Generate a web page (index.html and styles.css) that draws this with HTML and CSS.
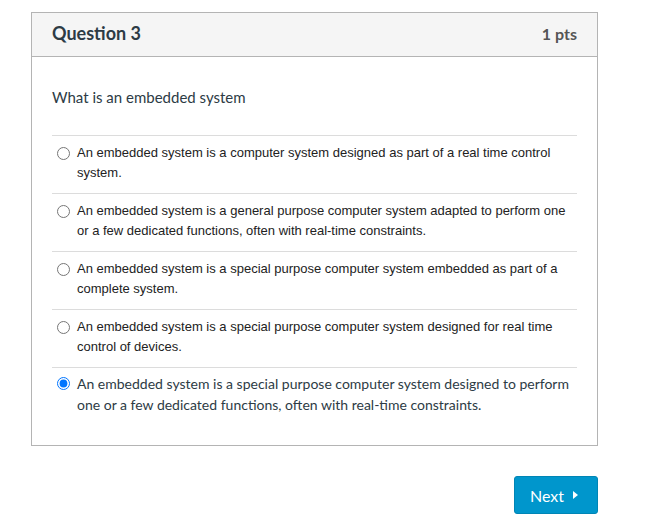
FILE: index.html
```html
<!DOCTYPE html>
<html>
<head>
<meta charset="utf-8">
<link rel="stylesheet" href="styles.css">
</head>
<body>
<div class="page">
  <div class="card">
    <div class="card-header">
      <span class="q-title">Question 3</span>
      <span class="q-pts">1 pts</span>
    </div>
    <div class="card-body">
      <div class="q-text">What is an embedded system</div>
      <div class="answers">
        <label class="answer arial"><input type="radio" name="a" class="radio"><span>An embedded system is a computer system designed as part of a real time control system.</span></label>
        <label class="answer arial"><input type="radio" name="a" class="radio"><span>An embedded system is a general purpose computer system adapted to perform one or a few dedicated functions, often with real-time constraints.</span></label>
        <label class="answer arial"><input type="radio" name="a" class="radio"><span>An embedded system is a special purpose computer system embedded as part of a complete system.</span></label>
        <label class="answer arial"><input type="radio" name="a" class="radio"><span>An embedded system is a special purpose computer system designed for real time control of devices.</span></label>
        <label class="answer lato"><input type="radio" name="a" class="radio" checked><span>An embedded system is a special purpose computer system designed to perform one or a few dedicated functions, often with real-time constraints.</span></label>
      </div>
    </div>
  </div>
  <div class="footer">
    <button class="next">Next <span class="tri"></span></button>
  </div>
</div>
</body>
</html>
```

FILE: styles.css
```css
html, body { margin: 0; padding: 0; background: #fff; }
body { font-family: Lato, "Liberation Sans", sans-serif; color: #2d3b45; }
.page { padding: 12px 0 0 31px; width: 567px; }
.card { border: 1px solid #b4b4b4; }
.card-header {
  background: #f5f5f5;
  border-bottom: 1px solid #b4b4b4;
  height: 44px;
  display: flex;
  align-items: center;
  justify-content: space-between;
  padding: 0 20px 3px 20px;
  box-sizing: border-box;
}
.q-title { font-size: 18px; font-weight: 700; color: #2d3b45; }
.q-pts { font-size: 16px; font-weight: 700; color: #555; }
.card-body { padding: 0 20px 20px 20px; }
.q-text { font-size: 15px; line-height: 20px; padding: 30px 0 28px 0; color: #2d3b45; }
.answer {
  display: flex;
  align-items: flex-start;
  border-top: 1px solid #dcdcdc;
  padding: 7px 0 10px 0;
}
.answer span { display: block; }
.arial { font-family: "Liberation Sans", Arial, sans-serif; font-size: 13px; line-height: 20px; color: #222; }
.lato { font-family: Lato, sans-serif; font-size: 14px; line-height: 21px; color: #2d3b45; padding-top: 5px; padding-bottom: 10px; }
.radio { margin: 4px 7px 0 5px; width: 13px; height: 13px; flex: none; }
.lato .radio { margin-top: 4px; }
.footer { display: flex; justify-content: flex-end; padding-top: 30px; }
.next {
  background: #0096cc;
  color: #fff;
  border: 1px solid #0085b5;
  border-radius: 3px;
  font-family: Lato, sans-serif;
  font-size: 16px;
  height: 38px;
  width: 84px;
  padding: 0 4px 0 0;
  display: flex;
  align-items: center;
  justify-content: center;
  gap: 9px;
}
.tri {
  display: inline-block;
  width: 0; height: 0;
  border-left: 5px solid #fff;
  border-top: 4px solid transparent;
  border-bottom: 4px solid transparent;
}
```
